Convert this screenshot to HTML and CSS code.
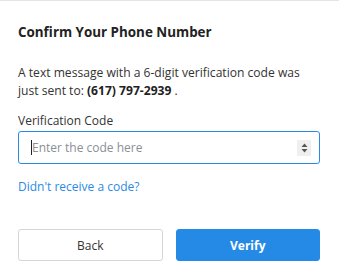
FILE: index.html
```html
<!DOCTYPE html>
<html>
<head>
<meta charset="utf-8">
<link rel="stylesheet" href="styles.css">
</head>
<body>
<div class="dialog">
  <h1 class="title">Confirm Your Phone Number</h1>
  <p class="message">A text message with a 6-digit verification code was just sent to: <strong>(617) 797-2939</strong>&nbsp;.</p>
  <label class="label" for="code">Verification Code</label>
  <div class="field">
    <span class="caret"></span>
    <span class="placeholder">Enter the code here</span>
    <span class="spinner">
      <svg width="7" height="10" viewBox="0 0 7 10"><path d="M3.5 0.5 L6.5 4 L0.5 4 Z M0.5 6 L6.5 6 L3.5 9.5 Z" fill="#555"/></svg>
    </span>
  </div>
  <a class="link" href="#">Didn't receive a code?</a>
  <div class="actions">
    <button class="btn btn-back">Back</button>
    <button class="btn btn-verify">Verify</button>
  </div>
</div>
</body>
</html>
```
FILE: styles.css
```css
html, body {
  margin: 0;
  padding: 0;
  background: #fff;
}
body {
  font-family: "Open Sans", "Noto Sans", sans-serif;
  color: #333;
  width: 339px;
  height: 279px;
  overflow: hidden;
}
.dialog {
  border-top: 1px solid #e3e5e8;
  padding: 0 19px 0 18px;
  display: flex;
  flex-direction: column;
}
.title {
  margin: 21px 0 0;
  font-size: 13.4px;
  line-height: 20px;
  font-weight: 700;
  color: #222;
}
.message {
  margin: 22px 0 0;
  font-size: 12.1px;
  line-height: 18px;
  color: #333;
}
.message strong {
  font-weight: 700;
  color: #222;
}
.label {
  margin-top: 12px;
  font-size: 12px;
  line-height: 18px;
  color: #333;
}
.field {
  margin-top: 1px;
  height: 31px;
  border: 1px solid #2a8be6;
  border-radius: 3px;
  display: flex;
  align-items: center;
  padding: 0 8px 0 12px;
}
.caret {
  width: 1px;
  height: 15px;
  background: #222;
}
.placeholder {
  flex: 1;
  font-size: 12px;
  color: #8a8f96;
}
.spinner {
  width: 14px;
  height: 16px;
  background: #efefef;
  display: flex;
  align-items: center;
  justify-content: center;
}
.link {
  margin-top: 14px;
  font-size: 12px;
  line-height: 18px;
  color: #2a8be6;
  text-decoration: none;
  align-self: flex-start;
}
.actions {
  margin-top: 33px;
  display: flex;
  gap: 13px;
}
.btn {
  flex: 1;
  height: 32px;
  border-radius: 3px;
  font-family: "Open Sans", "Noto Sans", sans-serif;
  font-size: 12px;
  cursor: pointer;
}
.btn-back {
  background: #fff;
  border: 1px solid #d3d6da;
  color: #333;
}
.btn-verify {
  background: #2589e6;
  border: 1px solid #2589e6;
  color: #fff;
  font-weight: 700;
}
```
